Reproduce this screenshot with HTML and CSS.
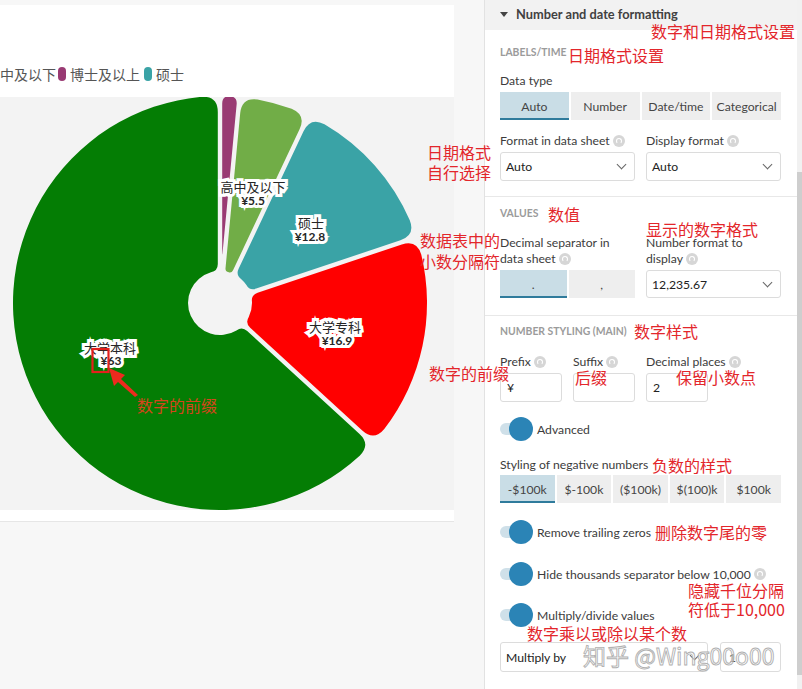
FILE: index.html
```html
<!DOCTYPE html>
<html lang="zh">
<head>
<meta charset="utf-8">
<title>Number and date formatting</title>
<link rel="stylesheet" href="styles.css">
</head>
<body>
<div class="page">
  <div class="left">
    <div class="card">
      <div class="legend">
        <span class="lg-text lg-first">高中及以下</span>
        <span class="sw sw-purple"></span><span class="lg-text">博士及以上</span>
        <span class="sw sw-teal"></span><span class="lg-text">硕士</span>
      </div>
      <div class="chart">
        <svg class="pie" width="454" height="413" viewBox="0 0 454 413">
          <g id="slices"></g>
          <g class="labels">
            <text class="lbl" x="253" y="89">高中及以下</text>
            <text class="val" x="253" y="103">¥5.5</text>
            <text class="lbl" x="311" y="125">硕士</text>
            <text class="val" x="310" y="139">¥12.8</text>
            <text class="lbl" x="335" y="229">大学专科</text>
            <text class="val" x="337" y="243">¥16.9</text>
            <text class="lbl" x="110" y="250">大学本科</text>
            <text class="val" x="111" y="263">¥63</text>
          </g>
          <rect class="mark-box" x="92.5" y="252" width="16" height="23"></rect>
          <polygon class="mark-arrow" points="109,271 125,278 121,282 138,298 135,300 118,285 114,289"></polygon>
          <text class="mark-text" x="137" y="308">数字的前缀</text>
        </svg>
      </div>
      <div class="card-foot"></div>
    </div>
  </div>

  <div class="panel">
    <div class="panel-main">
      <div class="panel-head"><span class="caret"></span>Number and date formatting</div>

      <div class="section sec-labels">
        <div class="sec-title">LABELS/TIME</div>
        <div class="field-label lbl-datatype">Data type</div>
        <div class="seg seg4">
          <span class="on">Auto</span><span>Number</span><span>Date/time</span><span>Categorical</span>
        </div>
        <div class="cols2 row-format">
          <div>
            <div class="field-label">Format in data sheet<span class="help"></span></div>
            <div class="select"><span>Auto</span><span class="chev"></span></div>
          </div>
          <div>
            <div class="field-label">Display format<span class="help"></span></div>
            <div class="select"><span>Auto</span><span class="chev"></span></div>
          </div>
        </div>
      </div>

      <div class="section sec-values">
        <div class="sec-title">VALUES</div>
        <div class="cols2 row-values">
          <div>
            <div class="field-label two">Decimal separator in<br>data sheet<span class="help"></span></div>
            <div class="seg seg2">
              <span class="on">.</span><span>,</span>
            </div>
          </div>
          <div>
            <div class="field-label two">Number format to<br>display<span class="help"></span></div>
            <div class="select sel-num"><span>12,235.67</span><span class="chev"></span></div>
          </div>
        </div>
      </div>

      <div class="section sec-styling">
        <div class="sec-title">NUMBER STYLING (MAIN)</div>
        <div class="cols3">
          <div>
            <div class="field-label">Prefix<span class="help"></span></div>
            <div class="input">¥</div>
          </div>
          <div>
            <div class="field-label">Suffix<span class="help"></span></div>
            <div class="input"></div>
          </div>
          <div>
            <div class="field-label">Decimal places<span class="help"></span></div>
            <div class="input">2</div>
          </div>
        </div>

        <div class="toggle-row tr-adv"><span class="switch"></span>Advanced</div>

        <div class="field-label lbl-neg">Styling of negative numbers</div>
        <div class="seg seg5">
          <span class="on">-$100k</span><span>$-100k</span><span>($100k)</span><span>$(100)k</span><span>$100k</span>
        </div>

        <div class="toggle-row tr-zeros"><span class="switch"></span>Remove trailing zeros</div>
        <div class="toggle-row tr-thousands"><span class="switch"></span>Hide thousands separator below 10,000<span class="help"></span></div>
        <div class="toggle-row tr-multiply"><span class="switch"></span>Multiply/divide values</div>

        <div class="row-multiply">
          <div class="select sel-mult"><span>Multiply by</span><span class="chev"></span></div>
          <div class="input">1</div>
        </div>
      </div>
    </div>
    <div class="scrollbar"><div class="thumb"></div></div>
  </div>
</div>

<div class="note" style="left:651px;top:21px">数字和日期格式设置</div>
<div class="note" style="left:568px;top:45px">日期格式设置</div>
<div class="note" style="left:427px;top:142px">日期格式<br>自行选择</div>
<div class="note note-tight" style="left:420px;top:230px">数据表中的<br>小数分隔符</div>
<div class="note" style="left:548px;top:204px">数值</div>
<div class="note" style="left:646px;top:219px">显示的数字格式</div>
<div class="note" style="left:634px;top:321px">数字样式</div>
<div class="note" style="left:429px;top:363px">数字的前缀</div>
<div class="note" style="left:575px;top:367px">后缀</div>
<div class="note" style="left:676px;top:367px">保留小数点</div>
<div class="note" style="left:652px;top:455px">负数的样式</div>
<div class="note" style="left:655px;top:522px">删除数字尾的零</div>
<div class="note note-lh19" style="left:688px;top:581px">隐藏千位分隔<br>符低于10,000</div>
<div class="note" style="left:527px;top:623px">数字乘以或除以某个数</div>

<div class="watermark">知乎 @Wing00o00</div>

<script src="script.js"></script>
</body>
</html>
```

FILE: styles.css
```css
* { box-sizing: border-box; }
html, body { margin: 0; padding: 0; }
body {
  width: 802px;
  height: 689px;
  overflow: hidden;
  position: relative;
  background: #f7f7f7;
  font-family: Lato, "Noto Sans CJK SC", sans-serif;
  color: #3a3a3a;
}
.page { display: flex; height: 689px; }

/* ---------- left chart ---------- */
.left { width: 484px; flex: none; padding-top: 5px; }
.card {
  width: 454px;
  background: #fff;
  border-bottom: 1px solid #e6e6e6;
  overflow: hidden;
}
.legend {
  height: 92px;
  display: flex;
  align-items: flex-end;
  padding-bottom: 13px;
  font-family: "Noto Sans CJK SC", sans-serif;
  font-size: 14px;
  color: #555;
}
.lg-text { line-height: 20px; white-space: nowrap; }
.lg-first { margin-left: -14px; }
.sw {
  width: 8px;
  height: 14px;
  border-radius: 4px;
  margin: 0 4px 3px 2px;
  flex: none;
}
.sw-purple { background: #993a73; }
.sw-teal { background: #3aa3a6; margin-left: 4px; }
.chart { height: 413px; background: #f3f3f3; }
.pie { display: block; }
.card-foot { height: 11px; background: #fff; }

.pie text {
  font-family: "Noto Sans CJK SC", sans-serif;
  text-anchor: middle;
  dominant-baseline: central;
  paint-order: stroke;
  stroke: #fff;
  stroke-linejoin: miter;
  fill: #262626;
}
.pie .lbl { font-size: 13px; stroke-width: 6px; }
.pie .val { font-size: 12px; font-weight: 700; stroke-width: 6px; font-family: Lato, "Noto Sans CJK SC", sans-serif; }
.pie .mark-box { fill: none; stroke: #e3201c; stroke-width: 2.2px; }
.pie .mark-arrow { fill: #ee2a1e; }
.pie .mark-text { font-size: 16px; fill: #d4461c; stroke: none; text-anchor: start; }

/* ---------- right panel ---------- */
.panel {
  width: 318px;
  flex: none;
  display: flex;
  background: #fff;
  border-left: 1px solid #e2e2e2;
}
.panel-main { width: 312px; flex: none; }
.scrollbar { width: 5px; background: #f1f1f1; }
.thumb { margin-top: 172px; height: 503px; background: #cecece; }

.panel-head {
  height: 30px;
  background: #f2f2f2;
  padding-left: 15px;
  display: flex;
  align-items: center;
  font-size: 12.8px;
  font-weight: 700;
  color: #414141;
  padding-bottom: 2px;
}
.caret {
  width: 0; height: 0;
  border-left: 4px solid transparent;
  border-right: 4px solid transparent;
  border-top: 5px solid #444;
  margin-right: 8px;
}

.section { padding: 0 16px 0 15px; border-bottom: 1px solid #e8e8e8; }
.section:last-child { border-bottom: none; }
.sec-labels { padding-top: 15px; padding-bottom: 15px; }
.sec-values { padding-top: 9px; padding-bottom: 17px; }
.sec-styling { padding-top: 8px; }

.sec-title {
  font-size: 10.4px;
  line-height: 14px;
  font-weight: 700;
  color: #9b9b9b;
}
.field-label {
  font-size: 12.2px;
  line-height: 16px;
  color: #3c3c3c;
  margin-bottom: 3px;
  white-space: nowrap;
}
.lbl-datatype { margin-top: 14px; }
.help {
  display: inline-block;
  width: 12px;
  height: 12px;
  border-radius: 50%;
  background: #d6d6d6;
  margin-left: 3px;
  vertical-align: -2px;
  position: relative;
}
.help::after {
  content: "";
  position: absolute;
  left: 3px; top: 3px;
  width: 6px; height: 6px;
  border-radius: 50%;
  border: 1.4px solid #fff;
  border-bottom-color: transparent;
  box-sizing: border-box;
}

.seg { display: flex; gap: 2px; }
.seg > span {
  flex: 1;
  height: 28px;
  background: #eeeeee;
  display: flex;
  align-items: center;
  justify-content: center;
  font-size: 12.2px;
  color: #454545;
  white-space: nowrap;
}
.seg > span.on { background: #c9dde6; box-shadow: inset 0 -2px 0 #2f7b9c; }

.cols2 { display: grid; grid-template-columns: 135px 135px; column-gap: 11px; }
.row-format { margin-top: 13px; }
.row-values { margin-top: 15px; align-items: end; }
.cols3 { display: grid; grid-template-columns: 62px 62px 62px; column-gap: 11px; margin-top: 16px; }

.select {
  height: 29px;
  border: 1px solid #dcdcdc;
  border-radius: 3px;
  display: flex;
  align-items: center;
  justify-content: space-between;
  padding: 0 9px 0 5px;
  font-size: 12.2px;
  color: #222;
}
.sel-num { height: 28px; }
.chev {
  width: 7px; height: 7px;
  border-right: 1.2px solid #666;
  border-bottom: 1.2px solid #666;
  transform: rotate(45deg);
  margin-top: -4px;
}
.input {
  height: 29px;
  border: 1px solid #dcdcdc;
  border-radius: 3px;
  padding-left: 6px;
  display: flex;
  align-items: center;
  font-size: 12.2px;
  color: #222;
}

.toggle-row {
  height: 24px;
  display: flex;
  align-items: center;
  font-size: 12.2px;
  color: #3c3c3c;
  white-space: nowrap;
}
.switch { width: 33px; height: 24px; flex: none; margin-right: 4px; position: relative; }
.switch::before {
  content: "";
  position: absolute;
  left: 0; top: 6px;
  width: 30px; height: 12px;
  border-radius: 6px;
  background: #cfe0e9;
}
.switch::after {
  content: "";
  position: absolute;
  left: 9px; top: 0;
  width: 24px; height: 24px;
  border-radius: 50%;
  background: #2b84b6;
}
.tr-adv { margin-top: 15px; }
.lbl-neg { margin-top: 16px; margin-bottom: 2px; }
.tr-zeros { margin-top: 17px; }
.tr-thousands { margin-top: 18px; }
.tr-multiply { margin-top: 17px; }
.row-multiply { display: flex; gap: 12px; margin-top: 15px; }
.sel-mult { width: 208px; height: 30px; }
.row-multiply .input { width: 61px; height: 30px; padding-left: 8px; }

/* ---------- annotations ---------- */
.note {
  position: absolute;
  font-family: "Noto Sans CJK SC", sans-serif;
  font-size: 16px;
  line-height: 20px;
  color: #e3262b;
  white-space: nowrap;
}
.note-tight { line-height: 21px; }
.note-lh19 { line-height: 19px; }
.watermark {
  position: absolute;
  left: 583px;
  top: 640px;
  font-family: "Noto Sans CJK SC", sans-serif;
  font-size: 23px;
  line-height: 30px;
  color: rgba(255, 255, 255, 0.55);
  -webkit-text-stroke: 0.9px #b0b0b0;
  white-space: nowrap;
}
```

FILE: script.js
```js
(function () {
  var g = document.getElementById('slices');
  var cx = 220, cy = 206, R = 207, r0 = 32, h = 2.2;
  var RCO = 16, RCI = 7;
  var data = [
    { v: 1.5, c: '#993a73' },
    { v: 5.5, c: '#71ad47' },
    { v: 12.8, c: '#3aa3a6' },
    { v: 16.9, c: '#ff0000' },
    { v: 63, c: '#047d04' }
  ];
  var total = 0;
  data.forEach(function (d) { total += d.v; });

  function P(rho, th) { return [cx + rho * Math.sin(th), cy - rho * Math.cos(th)]; }
  function L(t, s, th) {
    return [cx + t * Math.sin(th) + s * Math.cos(th), cy - t * Math.cos(th) + s * Math.sin(th)];
  }
  function f(p) { return p[0].toFixed(2) + ' ' + p[1].toFixed(2); }

  var a = 0;
  data.forEach(function (d) {
    var a1 = a, a2 = a + d.v / total * Math.PI * 2;
    a = a2;
    var half = (a2 - a1) / 2;
    var tO = Math.sqrt(R * R - h * h);
    var a1o = a1 + Math.asin(h / R), a2o = a2 - Math.asin(h / R);
    var tipRho = h / Math.sin(half);
    var tip = half < Math.PI / 2 && tipRho >= r0;
    var tIn, innerArcLen = 0, a1i, a2i;
    if (tip) {
      tIn = h / Math.tan(half);
    } else {
      tIn = Math.sqrt(r0 * r0 - h * h);
      a1i = a1 + Math.asin(h / r0);
      a2i = a2 - Math.asin(h / r0);
      innerArcLen = (a2i - a1i) * r0;
    }
    var edge = tO - tIn;
    var outerLen = (a2o - a1o) * R;
    var rco = Math.min(RCO, outerLen / 2 * 0.98, edge * 0.45);
    var OL = L(tO, h, a1), OR = L(tO, -h, a2);
    var A = L(tO - rco, h, a1);
    var B = P(R, a1o + rco / R);
    var C = P(R, a2o - rco / R);
    var D = L(tO - rco, -h, a2);
    var large = (a2o - a1o - 2 * rco / R) > Math.PI ? 1 : 0;
    var path = 'M' + f(A) + ' Q' + f(OL) + ' ' + f(B) +
      ' A' + R + ' ' + R + ' 0 ' + large + ' 1 ' + f(C) +
      ' Q' + f(OR) + ' ' + f(D);
    if (tip) {
      var rt = Math.min(4, edge * 0.3);
      var T = P(tipRho, (a1 + a2) / 2);
      var E = L(tIn + rt, -h, a2), F = L(tIn + rt, h, a1);
      path += ' L' + f(E) + ' Q' + f(T) + ' ' + f(F) + ' Z';
    } else {
      var rci = Math.min(RCI, innerArcLen / 2 * 0.98, edge * 0.45);
      var IR = L(tIn, -h, a2), IL = L(tIn, h, a1);
      var E2 = L(tIn + rci, -h, a2);
      var G = P(r0, a2i - rci / r0);
      var H = P(r0, a1i + rci / r0);
      var F2 = L(tIn + rci, h, a1);
      var largeI = (a2i - a1i - 2 * rci / r0) > Math.PI ? 1 : 0;
      path += ' L' + f(E2) + ' Q' + f(IR) + ' ' + f(G) +
        ' A' + r0 + ' ' + r0 + ' 0 ' + largeI + ' 0 ' + f(H) +
        ' Q' + f(IL) + ' ' + f(F2) + ' Z';
    }
    var el = document.createElementNS('http://www.w3.org/2000/svg', 'path');
    el.setAttribute('d', path);
    el.setAttribute('fill', d.c);
    g.appendChild(el);
  });
})();
```
